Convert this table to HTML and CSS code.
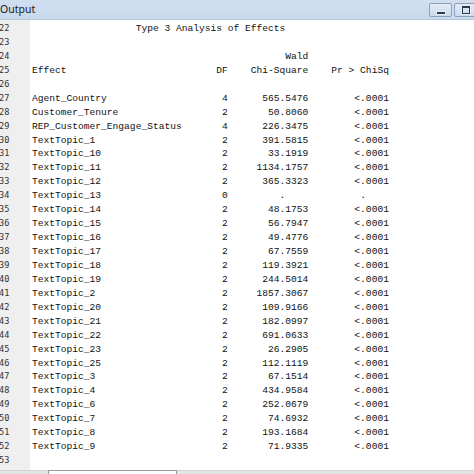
FILE: index.html
```html
<!DOCTYPE html>
<html>
<head>
<meta charset="utf-8">
<link rel="stylesheet" href="styles.css">
</head>
<body>
<div class="window">
  <div class="titlebar">
    <span class="title">Output</span>
    <div class="buttons">
      <div class="btn"><span class="min-icon"></span></div>
      <div class="btn"><span class="max-icon"></span></div>
    </div>
  </div>
  <div class="listing">
    <div class="gutter">
      <div>22</div><div>23</div><div>24</div><div>25</div><div>26</div><div>27</div><div>28</div><div>29</div><div>30</div><div>31</div><div>32</div><div>33</div><div>34</div><div>35</div><div>36</div><div>37</div><div>38</div><div>39</div><div>40</div><div>41</div><div>42</div><div>43</div><div>44</div><div>45</div><div>46</div><div>47</div><div>48</div><div>49</div><div>50</div><div>51</div><div>52</div><div>53</div>
    </div>
    <div class="content">
      <div class="line title-line">Type 3 Analysis of Effects</div>
      <div class="line"></div>
      <div class="row"><span></span><span></span><span class="num">Wald</span><span></span></div>
      <div class="row"><span>Effect</span><span class="num">DF</span><span class="num">Chi-Square</span><span class="num">Pr &gt; ChiSq</span></div>
      <div class="line"></div>
      <div class="row"><span>Agent_Country</span><span class="num">4</span><span class="num">565.5476</span><span class="num">&lt;.0001</span></div>
      <div class="row"><span>Customer_Tenure</span><span class="num">2</span><span class="num">50.8060</span><span class="num">&lt;.0001</span></div>
      <div class="row"><span>REP_Customer_Engage_Status</span><span class="num">4</span><span class="num">226.3475</span><span class="num">&lt;.0001</span></div>
      <div class="row"><span>TextTopic_1</span><span class="num">2</span><span class="num">391.5815</span><span class="num">&lt;.0001</span></div>
      <div class="row"><span>TextTopic_10</span><span class="num">2</span><span class="num">33.1919</span><span class="num">&lt;.0001</span></div>
      <div class="row"><span>TextTopic_11</span><span class="num">2</span><span class="num">1134.1757</span><span class="num">&lt;.0001</span></div>
      <div class="row"><span>TextTopic_12</span><span class="num">2</span><span class="num">365.3323</span><span class="num">&lt;.0001</span></div>
      <div class="row"><span>TextTopic_13</span><span class="num">0</span><span class="num miss">.</span><span class="num miss">.</span></div>
      <div class="row"><span>TextTopic_14</span><span class="num">2</span><span class="num">48.1753</span><span class="num">&lt;.0001</span></div>
      <div class="row"><span>TextTopic_15</span><span class="num">2</span><span class="num">56.7947</span><span class="num">&lt;.0001</span></div>
      <div class="row"><span>TextTopic_16</span><span class="num">2</span><span class="num">49.4776</span><span class="num">&lt;.0001</span></div>
      <div class="row"><span>TextTopic_17</span><span class="num">2</span><span class="num">67.7559</span><span class="num">&lt;.0001</span></div>
      <div class="row"><span>TextTopic_18</span><span class="num">2</span><span class="num">119.3921</span><span class="num">&lt;.0001</span></div>
      <div class="row"><span>TextTopic_19</span><span class="num">2</span><span class="num">244.5014</span><span class="num">&lt;.0001</span></div>
      <div class="row"><span>TextTopic_2</span><span class="num">2</span><span class="num">1857.3067</span><span class="num">&lt;.0001</span></div>
      <div class="row"><span>TextTopic_20</span><span class="num">2</span><span class="num">109.9166</span><span class="num">&lt;.0001</span></div>
      <div class="row"><span>TextTopic_21</span><span class="num">2</span><span class="num">182.0997</span><span class="num">&lt;.0001</span></div>
      <div class="row"><span>TextTopic_22</span><span class="num">2</span><span class="num">691.0633</span><span class="num">&lt;.0001</span></div>
      <div class="row"><span>TextTopic_23</span><span class="num">2</span><span class="num">26.2905</span><span class="num">&lt;.0001</span></div>
      <div class="row"><span>TextTopic_25</span><span class="num">2</span><span class="num">112.1119</span><span class="num">&lt;.0001</span></div>
      <div class="row"><span>TextTopic_3</span><span class="num">2</span><span class="num">67.1514</span><span class="num">&lt;.0001</span></div>
      <div class="row"><span>TextTopic_4</span><span class="num">2</span><span class="num">434.9584</span><span class="num">&lt;.0001</span></div>
      <div class="row"><span>TextTopic_6</span><span class="num">2</span><span class="num">252.0679</span><span class="num">&lt;.0001</span></div>
      <div class="row"><span>TextTopic_7</span><span class="num">2</span><span class="num">74.6932</span><span class="num">&lt;.0001</span></div>
      <div class="row"><span>TextTopic_8</span><span class="num">2</span><span class="num">193.1684</span><span class="num">&lt;.0001</span></div>
      <div class="row"><span>TextTopic_9</span><span class="num">2</span><span class="num">71.9335</span><span class="num">&lt;.0001</span></div>
      <div class="line"></div>
    </div>
  </div>
  <div class="bottombar"><div class="tab"></div></div>
</div>
</body>
</html>
```

FILE: styles.css
```css
html, body {
  margin: 0;
  padding: 0;
  width: 474px;
  height: 474px;
  overflow: hidden;
  background: #ffffff;
}

.window {
  display: flex;
  flex-direction: column;
  width: 474px;
  height: 474px;
}

.titlebar {
  height: 19px;
  border-bottom: 1px solid #b9c9dc;
  background: linear-gradient(#d0dff0, #c8d9ec);
  display: flex;
  align-items: center;
  justify-content: space-between;
  flex-shrink: 0;
}

.title {
  font-family: "Noto Sans", "Open Sans", sans-serif;
  font-size: 10.5px;
  color: #1b1b1b;
  margin-left: 0;
  margin-top: -1px;
}

.buttons {
  display: flex;
  gap: 2px;
  margin-right: -3px;
  align-self: flex-start;
  margin-top: 3px;
}

.btn {
  width: 21px;
  height: 12px;
  border: 1px solid #8aa0bc;
  border-radius: 2px;
  background: linear-gradient(#e4ecf6, #cbdaeb);
  display: flex;
  align-items: center;
  justify-content: center;
}

.min-icon {
  width: 8px;
  height: 2px;
  background: #2c3a4c;
  border: 1px solid #e8eef6;
  margin-top: 5px;
}

.max-icon {
  width: 6px;
  height: 5px;
  border: 1px solid #2c3a4c;
  border-top-width: 2px;
  box-shadow: 0 0 0 1px #e8eef6;
}

.listing {
  flex: 1;
  display: flex;
  font-size: 9.6px;
  line-height: 13.94px;
  overflow: hidden;
}

.gutter {
  width: 30px;
  background: #efefef;
  padding-top: 2px;
  font-family: "DejaVu Sans Mono", monospace;
  font-size: 8.6px;
  color: #333333;
  flex-shrink: 0;
}

.gutter div {
  height: 13.94px;
  margin-left: -1px;
}

.content {
  padding-top: 2px;
  padding-left: 2px;
  font-family: "Liberation Mono", monospace;
  color: #111111;
}

.line {
  height: 13.94px;
  white-space: pre;
}

.title-line {
  padding-left: 18ch;
}

.row {
  height: 13.94px;
  display: grid;
  grid-template-columns: 28ch 6ch 14ch 14ch;
  white-space: pre;
}

.num {
  text-align: right;
}

.miss {
  padding-right: 4ch;
}

.bottombar {
  height: 3px;
  flex-shrink: 0;
  background: #e4e4e4;
  border-top: 1px solid #d2d2d2;
  position: relative;
}

.tab {
  position: absolute;
  left: 48px;
  top: -1px;
  width: 127px;
  height: 6px;
  background: #ffffff;
  border: 1px solid #9a9a9a;
}
```
